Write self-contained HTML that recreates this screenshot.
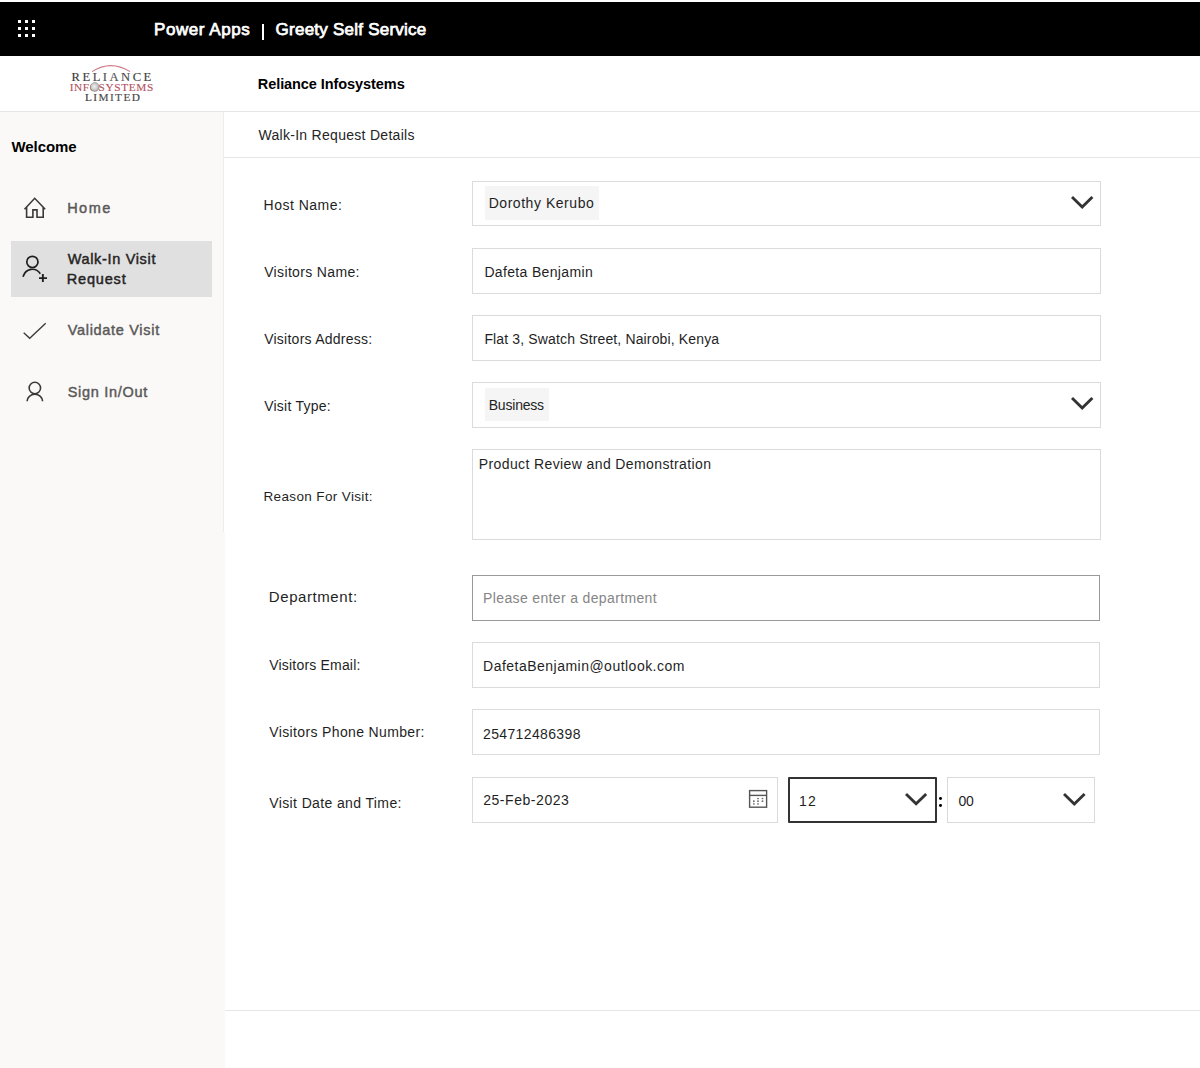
<!DOCTYPE html>
<html><head><meta charset="utf-8"><style>
html,body{margin:0;padding:0;width:1200px;height:1068px;overflow:hidden;background:#fff;position:relative}
.t{position:absolute;font-family:"Liberation Sans",sans-serif;line-height:1;white-space:nowrap}
.b{position:absolute;box-sizing:content-box}
</style></head><body>
<div class="b" style="left:0px;top:2px;width:1200px;height:54px;background:#000;"></div>
<div class="b" style="left:18.1px;top:20.4px;width:3px;height:3px;background:#fff;"></div>
<div class="b" style="left:18.1px;top:27px;width:3px;height:3px;background:#fff;"></div>
<div class="b" style="left:18.1px;top:33.75px;width:3px;height:3px;background:#fff;"></div>
<div class="b" style="left:24.75px;top:20.4px;width:3px;height:3px;background:#fff;"></div>
<div class="b" style="left:24.75px;top:27px;width:3px;height:3px;background:#fff;"></div>
<div class="b" style="left:24.75px;top:33.75px;width:3px;height:3px;background:#fff;"></div>
<div class="b" style="left:31.6px;top:20.4px;width:3px;height:3px;background:#fff;"></div>
<div class="b" style="left:31.6px;top:27px;width:3px;height:3px;background:#fff;"></div>
<div class="b" style="left:31.6px;top:33.75px;width:3px;height:3px;background:#fff;"></div>
<div class="t" style="left:154.0px;top:20.75px;font-size:17px;font-weight:400;letter-spacing:0.556px;-webkit-text-stroke:0.75px #fff;color:#fff;">Power Apps</div>
<div class="t" style="left:275.6px;top:20.75px;font-size:17px;font-weight:400;letter-spacing:0.233px;-webkit-text-stroke:0.75px #fff;color:#fff;">Greety Self Service</div>
<div class="b" style="left:261.5px;top:23.5px;width:2.2px;height:16.5px;background:#fff"></div>
<div class="b" style="left:0px;top:111px;width:1200px;height:1px;background:#e6e6e6;"></div>
<div class="b" style="left:0px;top:112px;width:223px;height:956px;background:#faf9f8;"></div>
<div class="b" style="left:223px;top:112px;width:1px;height:420px;background:#ededed;"></div>
<div class="b" style="left:223px;top:532px;width:2px;height:536px;background:#faf9f8;"></div>
<div class="b" style="left:224px;top:157px;width:976px;height:1px;background:#e6e6e6;"></div>
<div class="b" style="left:225px;top:1010px;width:975px;height:1px;background:#e6e6e6;"></div>
<svg class="b" style="left:66px;top:62px" width="92" height="42" viewBox="0 0 92 42">
<defs><radialGradient id="gl" cx="0.45" cy="0.45" r="0.6"><stop offset="0" stop-color="#f0f0f0"/><stop offset="0.7" stop-color="#c4c4c4"/><stop offset="1" stop-color="#8a8a8a"/></radialGradient>
<linearGradient id="gr" x1="0" x2="1" y1="0" y2="0"><stop offset="0" stop-color="#333"/><stop offset="0.5" stop-color="#555"/><stop offset="1" stop-color="#3a3a3a"/></linearGradient></defs>
<path d="M26 9.6 Q44.8 -2.4 64 9.6" fill="none" stroke="#cf7a86" stroke-width="1.1"/>
<text x="5.6" y="19.4" textLength="79.6" lengthAdjust="spacing" font-family="Liberation Serif" font-size="12.6" fill="url(#gr)" stroke="#444" stroke-width="0.15">RELIANCE</text>
<text x="3.7" y="29.2" textLength="83.5" lengthAdjust="spacing" font-family="Liberation Serif" font-size="11.3" fill="#b5525f" stroke="#b5525f" stroke-width="0.15">INFOSYSTEMS</text>
<circle cx="28.8" cy="25" r="4.4" fill="url(#gl)" stroke="#7a7a7a" stroke-width="0.5"/>
<text x="18.9" y="38.6" textLength="55" lengthAdjust="spacing" font-family="Liberation Serif" font-size="11.3" fill="url(#gr)" stroke="#444" stroke-width="0.15">LIMITED</text>
</svg>
<div class="t" style="left:257.8px;top:76.8px;font-size:14.5px;font-weight:700;letter-spacing:-0.073px;color:#000;">Reliance Infosystems</div>
<div class="t" style="left:258.5px;top:127.5px;font-size:14px;font-weight:400;letter-spacing:0.287px;color:#252525;">Walk-In Request Details</div>
<div class="t" style="left:11.5px;top:139.0px;font-size:15px;font-weight:700;letter-spacing:-0.083px;color:#000;">Welcome</div>
<div class="b" style="left:11px;top:241px;width:201px;height:56px;background:#e0e0e0;"></div>
<div class="t" style="left:67.2px;top:200.8px;font-size:14.5px;font-weight:400;letter-spacing:1.466px;-webkit-text-stroke:0.45px #5a5958;color:#5a5958;">Home</div>
<div class="t" style="left:67.7px;top:252.4px;font-size:14.5px;font-weight:400;letter-spacing:0.667px;-webkit-text-stroke:0.45px #252423;color:#252423;">Walk-In Visit</div>
<div class="t" style="left:66.7px;top:272.4px;font-size:14.5px;font-weight:400;letter-spacing:0.833px;-webkit-text-stroke:0.45px #252423;color:#252423;">Request</div>
<div class="t" style="left:67.7px;top:323.4px;font-size:14.5px;font-weight:400;letter-spacing:0.692px;-webkit-text-stroke:0.45px #5a5958;color:#5a5958;">Validate Visit</div>
<div class="t" style="left:67.7px;top:385.4px;font-size:14.5px;font-weight:400;letter-spacing:0.7px;-webkit-text-stroke:0.45px #5a5958;color:#5a5958;">Sign In/Out</div>
<svg class="b" style="left:20px;top:192px" width="30" height="30" viewBox="0 0 30 30">
<path d="M4.5 17.2 L14.7 6.3 L25.2 17.2 M6.6 14.9 V25.2 H12.9 V17.9 H17 V25.2 H23.2 V14.9" fill="none" stroke="#3b3a39" stroke-width="1.6" stroke-linejoin="miter"/>
</svg>
<svg class="b" style="left:18px;top:252px" width="32" height="32" viewBox="0 0 32 32">
<circle cx="14.4" cy="9.9" r="5.6" fill="none" stroke="#201f1e" stroke-width="1.7"/>
<path d="M5 24.85 A9.9 11 0 0 1 22.3 21.67" fill="none" stroke="#201f1e" stroke-width="1.7"/>
<path d="M21 26.1 H29 M24.85 22.1 V30.1" fill="none" stroke="#201f1e" stroke-width="1.9"/>
</svg>
<svg class="b" style="left:20px;top:318px" width="30" height="24" viewBox="0 0 30 24">
<path d="M3.7 14.7 L9.7 20.3 L25.7 5.3" fill="none" stroke="#3b3a39" stroke-width="1.35"/>
</svg>
<svg class="b" style="left:20px;top:378px" width="30" height="30" viewBox="0 0 30 30">
<circle cx="14.85" cy="10" r="5.7" fill="none" stroke="#3b3a39" stroke-width="1.6"/>
<path d="M7.1 23.2 A7.75 6.9 0 0 1 22.6 23.2" fill="none" stroke="#3b3a39" stroke-width="1.6"/>
</svg>
<div class="t" style="left:263.6px;top:197.6px;font-size:14px;font-weight:400;letter-spacing:0.489px;color:#1f1f1f;">Host Name:</div>
<div class="t" style="left:264.2px;top:265.4px;font-size:14px;font-weight:400;letter-spacing:0.346px;color:#1f1f1f;">Visitors Name:</div>
<div class="t" style="left:264.2px;top:331.9px;font-size:14px;font-weight:400;letter-spacing:0.244px;color:#1f1f1f;">Visitors Address:</div>
<div class="t" style="left:264.2px;top:399.4px;font-size:14px;font-weight:400;letter-spacing:0.23px;color:#1f1f1f;">Visit Type:</div>
<div class="t" style="left:263.5px;top:490.0px;font-size:13.5px;font-weight:400;letter-spacing:0.363px;color:#1f1f1f;">Reason For Visit:</div>
<div class="t" style="left:268.8px;top:588.9px;font-size:15px;font-weight:400;letter-spacing:0.58px;color:#1f1f1f;">Department:</div>
<div class="t" style="left:269.3px;top:658.0px;font-size:14px;font-weight:400;letter-spacing:0.186px;color:#1f1f1f;">Visitors Email:</div>
<div class="t" style="left:269.3px;top:725.3px;font-size:14px;font-weight:400;letter-spacing:0.357px;color:#1f1f1f;">Visitors Phone Number:</div>
<div class="t" style="left:269.3px;top:795.5px;font-size:14px;font-weight:400;letter-spacing:0.374px;color:#1f1f1f;">Visit Date and Time:</div>
<div class="b" style="left:472px;top:181px;width:627px;height:43px;border:1px solid #dbdbdb;background:#fff;"></div>
<div class="b" style="left:485px;top:186px;width:114px;height:34px;background:#f5f5f5;"></div>
<div class="t" style="left:488.7px;top:196.0px;font-size:14px;font-weight:400;letter-spacing:0.538px;color:#1f1f1f;">Dorothy Kerubo</div>
<svg class="b" style="left:1068.9px;top:194.2px" width="26.40" height="17.10" viewBox="0 0 26.40 17.10"><polyline points="3.01,3.01 13.20,13.08 23.39,3.01" fill="none" stroke="#333333" stroke-width="2.85" stroke-linecap="butt" stroke-linejoin="miter"/></svg>
<div class="b" style="left:472px;top:248px;width:627px;height:44px;border:1px solid #dbdbdb;background:#fff;"></div>
<div class="t" style="left:484.4px;top:264.9px;font-size:14px;font-weight:400;letter-spacing:0.343px;color:#1f1f1f;">Dafeta Benjamin</div>
<div class="b" style="left:472px;top:315px;width:627px;height:44px;border:1px solid #dbdbdb;background:#fff;"></div>
<div class="t" style="left:484.4px;top:332.0px;font-size:14px;font-weight:400;letter-spacing:0.144px;color:#1f1f1f;">Flat 3, Swatch Street, Nairobi, Kenya</div>
<div class="b" style="left:472px;top:382px;width:627px;height:44px;border:1px solid #dbdbdb;background:#fff;"></div>
<div class="b" style="left:485px;top:388px;width:64px;height:33px;background:#f5f5f5;"></div>
<div class="t" style="left:488.7px;top:398.0px;font-size:14px;font-weight:400;letter-spacing:-0.199px;color:#1f1f1f;">Business</div>
<svg class="b" style="left:1068.9px;top:395.2px" width="26.40" height="17.10" viewBox="0 0 26.40 17.10"><polyline points="3.01,3.01 13.20,13.08 23.39,3.01" fill="none" stroke="#333333" stroke-width="2.85" stroke-linecap="butt" stroke-linejoin="miter"/></svg>
<div class="b" style="left:472px;top:449px;width:627px;height:89px;border:1px solid #dbdbdb;background:#fff;"></div>
<div class="t" style="left:478.8px;top:457.3px;font-size:14px;font-weight:400;letter-spacing:0.387px;color:#1f1f1f;">Product Review and Demonstration</div>
<div class="b" style="left:472px;top:575px;width:626px;height:44px;border:1px solid #999999;background:#fff;"></div>
<div class="t" style="left:483.1px;top:591.4px;font-size:14px;font-weight:400;letter-spacing:0.354px;color:#858585;">Please enter a department</div>
<div class="b" style="left:472px;top:642px;width:626px;height:44px;border:1px solid #dbdbdb;background:#fff;"></div>
<div class="t" style="left:483.1px;top:659.3px;font-size:14px;font-weight:400;letter-spacing:0.48px;color:#1f1f1f;">DafetaBenjamin@outlook.com</div>
<div class="b" style="left:472px;top:709px;width:626px;height:44px;border:1px solid #dbdbdb;background:#fff;"></div>
<div class="t" style="left:483.0px;top:727.0px;font-size:14px;font-weight:400;letter-spacing:0.364px;color:#1f1f1f;">254712486398</div>
<div class="b" style="left:472px;top:777px;width:304px;height:44px;border:1px solid #dbdbdb;background:#fff;"></div>
<div class="t" style="left:483.2px;top:792.6px;font-size:14px;font-weight:400;letter-spacing:0.55px;color:#1f1f1f;">25-Feb-2023</div>
<svg class="b" style="left:748px;top:789px" width="20" height="20" viewBox="0 0 20 20">
<rect x="1.6" y="1.6" width="17" height="16.6" fill="none" stroke="#555" stroke-width="1.4"/>
<path d="M1.6 6.4 H18.6" stroke="#555" stroke-width="1.4"/>
<g fill="#666"><rect x="9.2" y="8.9" width="1.6" height="1.3"/><rect x="13.7" y="8.9" width="1.6" height="1.3"/>
<rect x="5" y="11.4" width="1.6" height="1.6"/><rect x="9.2" y="11.4" width="1.6" height="1.6"/><rect x="13.7" y="11.4" width="1.6" height="1.6"/>
<rect x="5" y="14.3" width="1.6" height="1.3"/><rect x="9.2" y="14.3" width="1.6" height="1.3"/></g>
</svg>
<div class="b" style="left:788px;top:777px;width:145px;height:42px;border:2px solid #333;background:#fff;border-radius:1px;"></div>
<div class="t" style="left:799.0px;top:794.0px;font-size:14px;font-weight:400;letter-spacing:1.1px;color:#1f1f1f;">12</div>
<svg class="b" style="left:903.2px;top:790.5px" width="26.20" height="16.80" viewBox="0 0 26.20 16.80"><polyline points="3.01,3.01 13.10,12.78 23.19,3.01" fill="none" stroke="#333333" stroke-width="2.85" stroke-linecap="butt" stroke-linejoin="miter"/></svg>
<div class="b" style="left:939.2px;top:797.2px;width:2.8px;height:2.8px;background:#000;border-radius:1.4px;"></div>
<div class="b" style="left:939.2px;top:803.9px;width:2.8px;height:2.8px;background:#000;border-radius:1.4px;"></div>
<div class="b" style="left:947px;top:777px;width:146px;height:44px;border:1px solid #dbdbdb;background:#fff;"></div>
<div class="t" style="left:958.4px;top:794.0px;font-size:14px;font-weight:400;letter-spacing:-0.3px;color:#1f1f1f;">00</div>
<svg class="b" style="left:1061px;top:790.7px" width="26.60" height="17.00" viewBox="0 0 26.60 17.00"><polyline points="3.01,3.01 13.30,12.98 23.59,3.01" fill="none" stroke="#333333" stroke-width="2.85" stroke-linecap="butt" stroke-linejoin="miter"/></svg>
</body></html>
